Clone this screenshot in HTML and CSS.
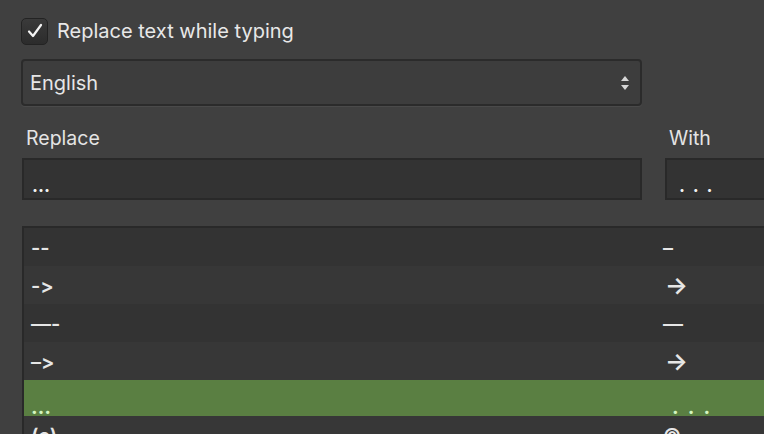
FILE: index.html
```html
<!DOCTYPE html>
<html lang="en">
<head>
    <meta charset="utf-8">
    <title>Text Replacement</title>
    <link rel="stylesheet" href="styles.css">
</head>
<body>
    <div class="prefs">
        <label class="check-row">
            <span class="check-box">
                <svg viewBox="0 0 20 20" width="20" height="20">
                    <polyline points="4,10.5 8,15 16,4" fill="none" stroke="#f4f4f4" stroke-width="2.2" stroke-linecap="round" stroke-linejoin="round"/>
                </svg>
            </span>
            <span class="check-label">Replace text while typing</span>
        </label>

        <div class="popup">
            <span class="popup-value">English</span>
            <span class="popup-arrows">
                <svg viewBox="0 0 10 20" width="10" height="20">
                    <polygon points="5,3 9,8 1,8" fill="#d6d6d6"/>
                    <polygon points="1,12 9,12 5,17" fill="#d6d6d6"/>
                </svg>
            </span>
        </div>

        <div class="fields">
            <div class="field-label">Replace</div>
            <div class="field-label">With</div>
            <div class="text-field">…</div>
            <div class="text-field spaced">. . .</div>
        </div>

        <div class="rules">
            <div class="rule"><span>--</span><span>–</span></div>
            <div class="rule"><span>-&gt;</span><span class="arrow">→</span></div>
            <div class="rule"><span>—-</span><span>—</span></div>
            <div class="rule"><span>–&gt;</span><span class="arrow">→</span></div>
            <div class="rule selected"><span>…</span><span class="spaced">. . .</span></div>
            <div class="rule"><span>(c)</span><span>©</span></div>
        </div>
    </div>
</body>
</html>
```

FILE: styles.css
```css
body {
    margin: 0;
    background-color: #404040;
    font-family: "Inter", "Noto Sans", sans-serif;
    font-feature-settings: "calt" 0, "liga" 0;
    color: #e6e6e6;
    overflow: hidden;
}

.prefs {
    width: 900px;
    padding: 17px 0 0 21px;
}

/* Checkbox */
.check-row {
    display: flex;
    align-items: center;
    gap: 9px;
    height: 28px;
}

.check-box {
    display: flex;
    justify-content: center;
    align-items: center;
    width: 25px;
    height: 25px;
    border: 1px solid #232323;
    border-radius: 5px;
    background: linear-gradient(#3a3a3a, #2c2c2c);
}

.check-label {
    font-size: 20px;
    color: #e8e8e8;
}

/* Popup */
.popup {
    display: flex;
    align-items: center;
    justify-content: space-between;
    box-sizing: border-box;
    width: 621px;
    height: 47px;
    margin-top: 14px;
    padding: 0 10px 0 7px;
    border: 2px solid #2b2b2b;
    border-radius: 4px;
    background-color: #3d3d3d;
    box-shadow: 0 1px 0 #4a4a4a;
}

.popup-value {
    font-size: 20px;
}

.popup-arrows {
    display: flex;
}

/* Replace / With */
.fields {
    display: grid;
    grid-template-columns: 620px 160px;
    column-gap: 23px;
    row-gap: 7px;
    margin: 19px 0 0 1px;
}

.field-label {
    padding-left: 4px;
    font-size: 19.5px;
    line-height: 26px;
    color: #e4e4e4;
}

.text-field {
    box-sizing: border-box;
    height: 42px;
    padding: 16px 0 0 8px;
    border: 2px solid #292929;
    background-color: #333333;
    font-size: 18px;
    font-weight: 700;
    line-height: 20px;
    color: #f2f2f2;
}

.text-field.spaced {
    padding-left: 12px;
}

.spaced {
    letter-spacing: 2px;
}

/* Rule list */
.rules {
    margin: 26px 0 0 1px;
    border-top: 2px solid #292929;
    border-left: 2px solid #292929;
}

.rule {
    display: grid;
    grid-template-columns: 632px 1fr;
    height: 38px;
    padding-left: 7px;
    align-items: center;
    font-size: 20px;
    font-weight: 600;
    line-height: 26px;
    padding-top: 2px;
    box-sizing: border-box;
    background-color: #333333;
}

.rule:nth-child(even) {
    background-color: #373737;
}

.rule .arrow {
    font-size: 24px;
    padding-left: 2px;
}

.rule.selected {
    height: 36px;
    padding-top: 14px;
    background-color: #5a7f42;
    color: #d4f5c0;
    font-weight: 700;
}

.rule.selected .spaced {
    padding-left: 9px;
    letter-spacing: 2.5px;
}
```
